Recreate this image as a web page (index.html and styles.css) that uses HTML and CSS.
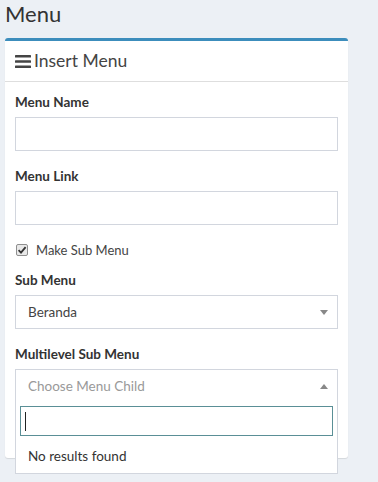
FILE: index.html
```html
<!DOCTYPE html>
<html lang="id">
<head>
<meta charset="utf-8">
<title>Menu</title>
<link rel="stylesheet" href="styles.css">
</head>
<body>
<div class="page">
<h1 class="page-title">Menu</h1>
<div class="box">
  <div class="box-header">
    <svg class="bars" width="16" height="13" viewBox="0 0 16 13" aria-hidden="true">
      <rect x="0" y="0" width="16" height="2.6" rx="0.6"/>
      <rect x="0" y="5.2" width="16" height="2.6" rx="0.6"/>
      <rect x="0" y="10.4" width="16" height="2.6" rx="0.6"/>
    </svg>
    <span class="box-title">Insert Menu</span>
  </div>
  <div class="box-body">
    <div class="form-group">
      <label class="label">Menu Name</label>
      <div class="input"></div>
    </div>
    <div class="form-group">
      <label class="label">Menu Link</label>
      <div class="input"></div>
    </div>
    <div class="checkbox-row">
      <span class="checkbox">
        <svg width="10" height="10" viewBox="0 0 10 10" aria-hidden="true"><path d="M1.6 5.2 L4 7.6 L8.6 2.2" fill="none" stroke="#333" stroke-width="1.8"/></svg>
      </span>
      <span class="checkbox-text">Make Sub Menu</span>
    </div>
    <div class="form-group">
      <label class="label">Sub Menu</label>
      <div class="select">
        <span class="select-value">Beranda</span>
        <span class="arrow-down"></span>
      </div>
    </div>
    <div class="form-group">
      <label class="label">Multilevel Sub Menu</label>
      <div class="select-wrap">
        <div class="select open">
          <span class="select-placeholder">Choose Menu Child</span>
          <span class="arrow-up"></span>
        </div>
        <div class="dropdown">
          <div class="search">
            <div class="search-field"><span class="caret"></span></div>
          </div>
          <div class="no-results">No results found</div>
        </div>
      </div>
    </div>
  </div>
</div>
</div>
</body>
</html>
```
FILE: styles.css
```css
* { box-sizing: border-box; }
html, body {
  margin: 0;
  padding: 0;
  background: #ecf0f5;
  font-family: Lato, "Liberation Sans", sans-serif;
  color: #333;
}
.page {
  min-height: 482px;
  padding-bottom: 24px;
}
.page-title {
  margin: 0;
  padding: 0 0 0 5px;
  font-size: 22px;
  font-weight: 400;
  line-height: 27px;
  color: #333;
}
.box {
  margin: 11px 30px 0 5px;
  width: 343px;
  background: #fff;
  border-top: 3px solid #3c8dbc;
  border-radius: 3px;
  box-shadow: 0 1px 1px rgba(0,0,0,0.1);
}
.box-header {
  display: flex;
  align-items: center;
  height: 41px;
  padding: 0 10px;
  border-bottom: 1px solid #dedede;
  gap: 3px;
}
.bars { fill: #444; flex: none; }
.box-title {
  font-size: 17.5px;
  color: #444;
  line-height: 20px;
}
.box-body {
  padding: 10px 10px 55px 10px;
}
.form-group {
  margin-bottom: 15px;
}
.form-group:last-child { margin-bottom: 0; }
.label {
  display: block;
  font-size: 13.5px;
  font-weight: 700;
  line-height: 20px;
  margin-bottom: 5px;
  color: #333;
}
.input {
  height: 34px;
  border: 1px solid #d2d6de;
  background: #fff;
}
.checkbox-row {
  display: flex;
  align-items: center;
  height: 20px;
  margin-bottom: 10px;
  padding-left: 1px;
}
.checkbox {
  width: 12px;
  height: 12px;
  border: 1px solid #8f8f8f;
  border-radius: 2px;
  background: #e9e9e9;
  display: flex;
  align-items: center;
  justify-content: center;
}
.checkbox-text {
  margin-left: 8px;
  font-size: 13px;
  color: #444;
}
.select {
  height: 34px;
  border: 1px solid #d2d6de;
  display: flex;
  align-items: center;
  justify-content: space-between;
  padding: 0 9px 0 12px;
  font-size: 13.5px;
}
.select-value { color: #444; }
.select-placeholder { color: #999; }
.arrow-down {
  width: 0; height: 0;
  border-style: solid;
  border-width: 5px 4px 0 4px;
  border-color: #888 transparent transparent transparent;
}
.arrow-up {
  width: 0; height: 0;
  border-style: solid;
  border-width: 0 4px 5px 4px;
  border-color: transparent transparent #888 transparent;
}
.select-wrap { position: relative; }
.dropdown {
  position: absolute;
  left: 0;
  right: 0;
  top: 33px;
  background: #fff;
  border: 1px solid #d2d6de;
  border-top: none;
  z-index: 2;
}
.search { padding: 4px; }
.search-field {
  height: 30px;
  border: 1px solid #5a8f96;
  display: flex;
  align-items: center;
  padding-left: 4px;
}
.caret {
  display: block;
  width: 1px;
  height: 19px;
  background: #222;
}
.no-results {
  padding: 6px 12px 7px 12px;
  font-size: 13.5px;
  line-height: 20px;
  color: #333;
}
```
